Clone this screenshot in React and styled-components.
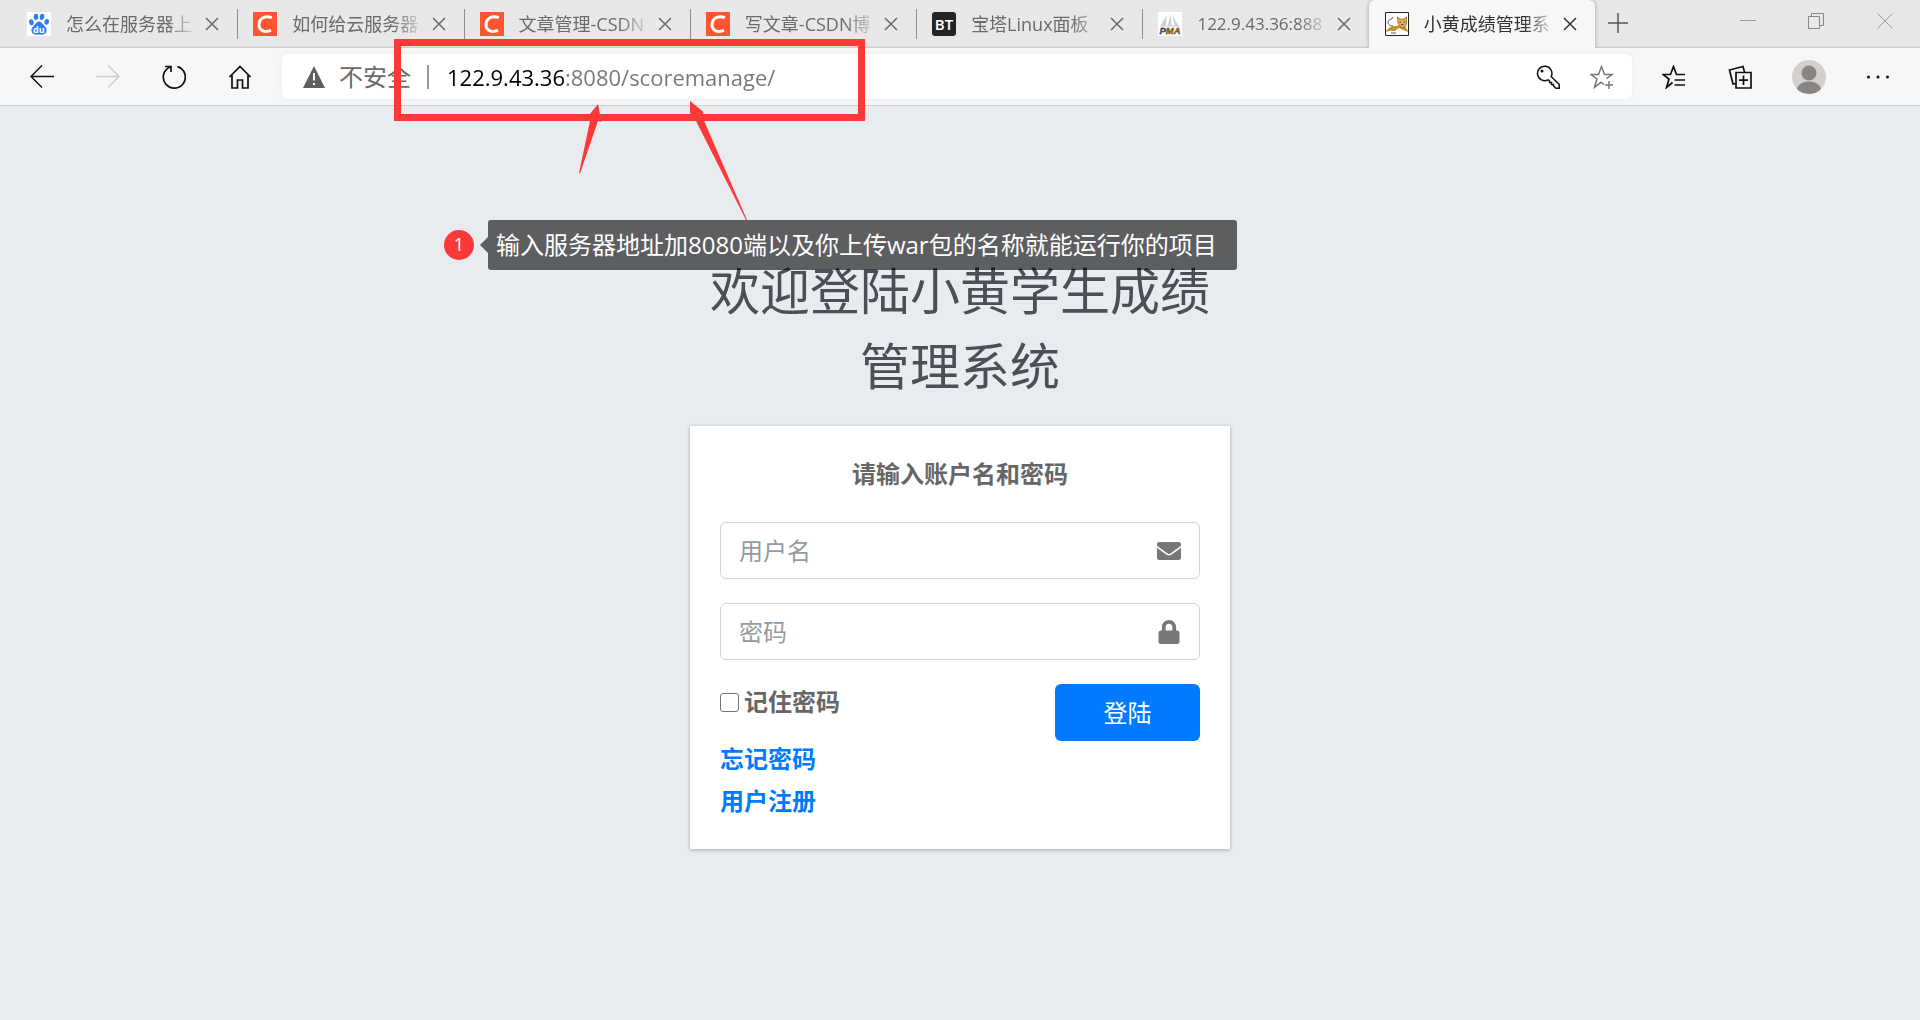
import React, { useState } from "react";
import styled, { createGlobalStyle } from "styled-components";
import { FaEnvelope, FaLock } from "react-icons/fa";

const GlobalStyle = createGlobalStyle`
  *, *::before, *::after { box-sizing: border-box; }
  body {
    margin: 0;
    font-family: "Open Sans", "Noto Sans CJK SC", sans-serif;
    background: #e9ecef;
  }
  button, input { font: inherit; }
`;

const Window = styled.div`
  position: relative;
  display: flex;
  flex-direction: column;
  min-height: 100vh;
  overflow: hidden;
`;

const TabStrip = styled.header`
  display: flex;
  height: 48px;
  padding-left: 11px;
  background: #e8e8e8;
  box-shadow: inset 0 -2px 2px -1px #c4c4c4;
`;

const TabList = styled.div`
  display: flex;
  flex: 0 1 1584px;
  min-width: 0;
`;

const Tab = styled.div`
  position: relative;
  display: flex;
  flex: 1 1 0;
  align-items: center;
  min-width: 0;
  padding: 0 7px 0 16px;
  color: ${(p) => (p.$active ? "#333" : "#6a6a6a")};
  background: ${(p) => (p.$active ? "#f7f7f7" : "transparent")};
  border-radius: 6px 6px 0 0;
  box-shadow: ${(p) => (p.$active ? "0 0 4px rgba(0, 0, 0, 0.3)" : "none")};
  clip-path: ${(p) => (p.$active ? "inset(0 -4px 0 -4px)" : "none")};

  &::after {
    content: "";
    position: absolute;
    right: -1px;
    top: 9px;
    width: 1px;
    height: 30px;
    background: ${(p) => (p.$active || p.$last ? "transparent" : "#8f8f8f")};
  }
`;

const TabTitle = styled.button`
  display: flex;
  flex: 1;
  align-items: center;
  gap: 15px;
  min-width: 0;
  height: 48px;
  padding: 0;
  border: 0;
  background: none;
  color: inherit;
  text-align: left;
`;

const TabText = styled.span`
  flex: 1;
  overflow: hidden;
  white-space: nowrap;
  font-size: ${(p) => (p.$latin ? 17 : 18)}px;
  line-height: 26px;
  mask-image: linear-gradient(90deg, #000 calc(100% - 28px), rgba(0, 0, 0, 0.15));
`;

const IconButton = styled.button`
  display: flex;
  flex: none;
  align-items: center;
  justify-content: center;
  width: ${(p) => p.$width || 24}px;
  height: ${(p) => p.$height || 24}px;
  padding: 0;
  border: 0;
  background: none;
  color: ${(p) => p.$color || "#111"};
`;

const NewTab = styled.div`
  display: flex;
  align-items: center;
  padding: 0 0 2px 11px;
`;

const WindowControls = styled.div`
  display: flex;
  margin-left: auto;
`;

const Toolbar = styled.nav`
  display: flex;
  align-items: center;
  height: 58px;
  padding: 0 9px;
  background: #f7f7f7;
  border-bottom: 1px solid #ccc;
`;

const AddressBar = styled.div`
  display: flex;
  flex: 1;
  align-items: center;
  height: 45px;
  margin: 0 9px;
  padding: 0 18px 0 21px;
  border-radius: 6px;
  background: #fff;
  box-shadow: 0 0 6px rgba(0, 0, 0, 0.06);
`;

const Security = styled.span`
  padding: 0 16px 0 14px;
  color: #6a6a6a;
  font-size: 24px;
  line-height: 36px;
`;

const Divider = styled.span`
  width: 2px;
  height: 24px;
  background: #999;
`;

const UrlInput = styled.input`
  flex: 1;
  min-width: 0;
  height: 36px;
  padding: 0;
  margin-left: 18px;
  border: 0;
  outline: 0;
  font-size: 22px;
  color: transparent;
  background: linear-gradient(90deg, #000 118px, #777 118px);
  background-clip: text;
`;

const AddressActions = styled.div`
  display: flex;
  gap: 30px;
`;

const Page = styled.main`
  display: flex;
  flex: 1;
  flex-direction: column;
  align-items: center;
  justify-content: center;
  padding-bottom: 23px;
`;

const LoginBox = styled.div`
  width: 540px;
  max-width: 100%;
`;

const Heading = styled.h1`
  margin: 0 0 22px;
  color: #495057;
  font-size: 50px;
  font-weight: 400;
  line-height: 75px;
  text-align: center;
`;

const Card = styled.form`
  padding: 30px;
  background: #fff;
  box-shadow: 0 1px 4px rgba(0, 0, 0, 0.28);
  color: #666;
  font-size: 24px;
  line-height: 36px;
`;

const CardTitle = styled.p`
  margin: 0 0 30px;
  font-weight: 700;
  text-align: center;
`;

const Field = styled.label`
  display: flex;
  align-items: center;
  height: 57px;
  margin-bottom: 24px;
  padding: 0 18px;
  border: 1px solid #ced4da;
  border-radius: 6px;
  color: #777;

  svg {
    width: auto;
    height: 24px;
  }
`;

const FieldInput = styled.input`
  flex: 1;
  min-width: 0;
  height: 36px;
  padding: 0;
  border: 0;
  outline: 0;
  background: none;

  &::placeholder { color: #939ba2; }
`;

const ActionRow = styled.div`
  display: flex;
  align-items: flex-start;
  justify-content: space-between;
`;

const Remember = styled.label`
  display: flex;
  align-items: center;
  gap: 5px;
  font-weight: 700;
`;

const Checkbox = styled.input`
  appearance: none;
  width: 19px;
  height: 19px;
  margin: 0;
  border: 1px solid #767676;
  border-radius: 3px;
  background: #fff;

  &:checked { background: #007bff; }
`;

const Submit = styled.button`
  width: 145px;
  height: 57px;
  padding: 0;
  border: 0;
  border-radius: 6px;
  background: #007bff;
  color: #fff;
`;

const Links = styled.div`
  display: flex;
  flex-direction: column;
  align-items: flex-start;
  gap: 6px;

  a {
    color: #007bff;
    font-weight: 700;
    text-decoration: none;
  }
`;

const Annotations = styled.div`
  position: absolute;
  inset: 0;
  pointer-events: none;
`;

const Highlight = styled.div`
  position: absolute;
  left: 394px;
  top: 39px;
  width: 471px;
  height: 82px;
  border: 7px solid #fd3838;
`;

const Arrows = styled.svg`
  position: absolute;
  left: 570px;
  top: 96px;
`;

const Callout = styled.div`
  position: absolute;
  left: 444px;
  top: 220px;
  display: flex;
  align-items: center;
`;

const Step = styled.span`
  width: 30px;
  height: 30px;
  margin-right: 6px;
  border-radius: 50%;
  background: #fd3838;
  color: #fff;
  font-size: 18px;
  line-height: 29px;
  text-align: center;
`;

const Pointer = styled.span`
  border: 8px solid transparent;
  border-left: 0;
  border-right-color: rgba(0, 0, 0, 0.6);
`;

const Note = styled.span`
  width: 749px;
  padding: 7px 8px;
  border-radius: 3px;
  background: rgba(0, 0, 0, 0.6);
  color: #fff;
  font-size: 24px;
  line-height: 36px;
  white-space: nowrap;
`;

const Svg = ({ size = 24, sw = 1.5, children }) => (
  <svg width={size} height={size} viewBox={`0 0 ${size} ${size}`} fill="none" stroke="currentColor" strokeWidth={sw} aria-hidden="true">
    {children}
  </svg>
);

const CloseIcon = () => (
  <Svg size={14}><path d="M1 1l12 12M13 1L1 13" /></Svg>
);

const BaiduIcon = () => (
  <svg width="24" height="24" viewBox="0 0 24 24">
    <path fill="#fff" d="M0 0h24v24H0z" />
    <g fill="#2b7ff5">
      <ellipse cx="4.4" cy="10.2" rx="2.3" ry="3" transform="rotate(-12 4.4 10.2)" />
      <ellipse cx="9" cy="4.8" rx="2.3" ry="3.1" />
      <ellipse cx="15" cy="4.9" rx="2.3" ry="3.1" transform="rotate(10 15 4.9)" />
      <ellipse cx="19.7" cy="9.8" rx="2.3" ry="2.9" transform="rotate(8 19.7 9.8)" />
      <path d="M12 9.6c2.6 0 3.4 2.3 5.3 4.1 2 1.9 2.8 3.6 2 6-1 3-4.3 3.3-7.3 2.7-3 .6-6.3.3-7.3-2.7-.8-2.4.2-4.1 2.200-6C8.800 11.900 9.400 9.600 12 9.600z" />
    </g>
    <text x="11.8" y="20.5" textAnchor="middle" fill="#fff" fontFamily="Open Sans" fontWeight="700" fontSize="9">du</text>
  </svg>
);

const CsdnIcon = () => (
  <svg width="24" height="24" viewBox="0 0 24 24">
    <path fill="#fc5531" d="M0 0h24v24H0z" />
    <path fill="none" stroke="#fff" strokeWidth="3" d="M18.8 5.6C12.5 3 6.2 6.2 6 12.8c-.1 6.3 6.4 7.8 12 5.6" />
  </svg>
);

const BtIcon = () => (
  <svg width="24" height="24" viewBox="0 0 24 24">
    <rect width="24" height="24" rx="3" fill="#242424" />
    <text x="12" y="17.500" textAnchor="middle" fill="#fff" fontFamily="Open Sans" fontWeight="600" fontSize="15">BT</text>
  </svg>
);

const PmaIcon = () => (
  <svg width="24" height="24" viewBox="0 0 24 24">
    <path fill="#fff" d="M0 0h24v24H0z" />
    <path fill="#d0d0d0" d="M8.5 3.5L2 14.5l6-1zM13 1.5L9.500 14h4zM14.500 3l2 11h4z" />
    <path fill="none" stroke="#ccc" d="M3 15.5c6-2 12-2 18-1" />
    <text x="12" y="22" textAnchor="middle" fontFamily="Liberation Sans" fontStyle="italic" fontWeight="700" fontSize="9.5" fill="#e08a00" stroke="#222" strokeWidth=".4"><tspan fill="#5a5fae">P</tspan>MA</text>
  </svg>
);

const TomcatIcon = () => (
  <svg width="24" height="24" viewBox="0 0 24 24">
    <path fill="#fff" stroke="#222" d="M.5.5h23v23H.5z" />
    <path fill="#c98f2b" d="M1 19c3-4 6-5 10-5l5-1 4 1 3 5v1l-5-2-4-2-4 3c-3 0-5-1-9 1z" />
    <path fill="#e2b04e" stroke="#6b4f1c" strokeWidth=".6" d="M12.500 5l2.500 2h4l2.500-2v6c0 3-2 4.500-4 4.500s-4-2-4.500-4.500z" />
    <path fill="none" stroke="#444" strokeWidth=".9" d="M8 14C4 14 2 11 3.500 8.500 5 7 8 7 8 5M14.500 10h1.500M18.500 10H20M16 12.500h2.500M6 21h5" />
  </svg>
);

const TABS = [
  { title: "怎么在服务器上", icon: BaiduIcon },
  { title: "如何给云服务器", icon: CsdnIcon },
  { title: "文章管理-CSDN", icon: CsdnIcon },
  { title: "写文章-CSDN博", icon: CsdnIcon },
  { title: "宝塔Linux面板", icon: BtIcon },
  { title: "122.9.43.36:888", icon: PmaIcon, latin: true },
  { title: "小黄成绩管理系", icon: TomcatIcon },
];

const ACTIVE_TAB = 6;

function Tabs() {
  return (
    <TabStrip>
      <TabList role="tablist">
        {TABS.map(({ title, icon: Icon, latin }, i) => (
          <Tab key={i} $active={i === ACTIVE_TAB} $last={i === ACTIVE_TAB - 1}>
            <TabTitle type="button" role="tab" aria-selected={i === ACTIVE_TAB}>
              <Icon />
              <TabText $latin={latin}>{title}</TabText>
            </TabTitle>
            <IconButton type="button" $width={36} $color="inherit" aria-label="关闭标签页"><CloseIcon /></IconButton>
          </Tab>
        ))}
      </TabList>
      <NewTab>
        <IconButton type="button" $color="#555" aria-label="新建标签页">
          <Svg><path d="M2 12h20M12 2v20" /></Svg>
        </IconButton>
      </NewTab>
      <WindowControls>
        <IconButton type="button" $width={68} $height={42} $color="#999" aria-label="最小化">
          <Svg size={16} sw={1}><path d="M0 7.5h16" /></Svg>
        </IconButton>
        <IconButton type="button" $width={68} $height={42} $color="#888" aria-label="还原">
          <Svg size={16} sw={1}><path d="M.5 3.5h11v12H.5zM3.5 3.5v-3h12v12h-4" /></Svg>
        </IconButton>
        <IconButton type="button" $width={70} $height={42} $color="#999" aria-label="关闭">
          <Svg size={16} sw={1}><path d="M.5.5l15 15M15.5.5l-15 15" /></Svg>
        </IconButton>
      </WindowControls>
    </TabStrip>
  );
}

function BrowserBar() {
  return (
    <Toolbar>
      <IconButton type="button" $width={66} aria-label="返回">
        <Svg><path d="M24 11.500H1M12 .5l-11 11 11 11" /></Svg>
      </IconButton>
      <IconButton type="button" $width={66} $color="#ccc" aria-label="前进">
        <Svg><path d="M0 11.500h23M12 .5l11 11-11 11" /></Svg>
      </IconButton>
      <IconButton type="button" $width={66} aria-label="刷新">
        <Svg sw={1.7}><path d="M15.5 1.600A11 11 0 1 1 8 2M3 1.500h6V7" /></Svg>
      </IconButton>
      <IconButton type="button" $width={66} aria-label="主页">
        <Svg sw={1.7}><path d="M1.500 12L12 1.500 22.500 12M4 10v13h5.500v-8h5v8H20V10" /></Svg>
      </IconButton>
      <AddressBar>
        <Svg size={22}>
          <path fill="#5f5f5f" stroke="none" d="M11 0l11 22H0z" />
          <path stroke="#fff" strokeWidth="2" d="M11 7v7.5M11 17v2" />
        </Svg>
        <Security>不安全</Security>
        <Divider />
        <UrlInput aria-label="地址栏" defaultValue="122.9.43.36:8080/scoremanage/" />
        <AddressActions>
          <IconButton type="button" aria-label="密码">
            <Svg>
              <path d="M15.200 11.500L23.200 19.500V23.200H20L17.500 21V19.500H15.500V17.500H13.500V15.800L12 14.800A7.200 7.200 0 1 1 15.200 11.500z" />
              <circle cx="6" cy="6" r="1.5" fill="currentColor" stroke="none" />
            </Svg>
          </IconButton>
          <IconButton type="button" $color="#777" aria-label="添加到收藏夹">
            <Svg><path d="M14 19.500l-3-2.200-6.500 5L7 14 1 9.500h7.500L11.500 1.500l3 8H22l-5.500 4.200M19 16v8M15 20h8" /></Svg>
          </IconButton>
        </AddressActions>
      </AddressBar>
      <IconButton type="button" $width={66} aria-label="收藏夹">
        <Svg sw={1.700}><path d="M10.500 17.500L4.500 22.500 7 14 1 9.500h7.500l3-8 3 8H23M12.500 15H23M12.500 20H23" /></Svg>
      </IconButton>
      <IconButton type="button" $width={66} aria-label="集锦">
        <Svg sw={1.7}><path d="M8 7.500h15v15.500H8zM15.500 10.500v9.500M11 15.200h9M7.500 18.500l-2.500.5L1.500 5 15 1.500 16.500 7" /></Svg>
      </IconButton>
      <IconButton type="button" $width={72} $height={34} aria-label="用户">
        <svg width="34" height="34" viewBox="0 0 34 34">
          <circle cx="17" cy="17" r="17" fill="#d2d0cd" />
          <circle cx="17" cy="13" r="7.5" fill="#8a8582" />
          <path fill="#8a8582" d="M5 29c2-10 22-10 24 0-6 6.500-18 6.500-24 0z" />
        </svg>
      </IconButton>
      <IconButton type="button" $width={66} aria-label="设置及其他">
        <Svg><g fill="currentColor" stroke="none"><circle cx="2.500" cy="12" r="1.5" /><circle cx="12" cy="12" r="1.5" /><circle cx="21.500" cy="12" r="1.5" /></g></Svg>
      </IconButton>
    </Toolbar>
  );
}

function LoginForm() {
  const [remember, setRemember] = useState(false);
  return (
    <LoginBox>
      <Heading>欢迎登陆小黄学生成绩管理系统</Heading>
      <Card onSubmit={(e) => e.preventDefault()}>
        <CardTitle>请输入账户名和密码</CardTitle>
        <Field>
          <FieldInput type="text" placeholder="用户名" aria-label="用户名" />
          <FaEnvelope />
        </Field>
        <Field>
          <FieldInput type="password" placeholder="密码" aria-label="密码" />
          <FaLock />
        </Field>
        <ActionRow>
          <Remember>
            <Checkbox type="checkbox" checked={remember} onChange={(e) => setRemember(e.target.checked)} />
            记住密码
          </Remember>
          <Submit type="submit">登陆</Submit>
        </ActionRow>
        <Links>
          <a href="#forgot">忘记密码</a>
          <a href="#register">用户注册</a>
        </Links>
      </Card>
    </LoginBox>
  );
}

export default function App() {
  return (
    <Window>
      <GlobalStyle />
      <Tabs />
      <BrowserBar />
      <Page><LoginForm /></Page>
      <Annotations>
        <Highlight />
        <Arrows width="180" height="126" viewBox="570 96 180 126" fill="#fd3838" aria-hidden="true">
          <path d="M598 104L590 114L590 121L579 173L580 173.5L598 121L601.5 122z" />
          <path d="M690 101L703.5 112L702 116L747 220H746L696 121L690 113z" />
        </Arrows>
        <Callout>
          <Step>1</Step>
          <Pointer />
          <Note>输入服务器地址加8080端以及你上传war包的名称就能运行你的项目</Note>
        </Callout>
      </Annotations>
    </Window>
  );
}
